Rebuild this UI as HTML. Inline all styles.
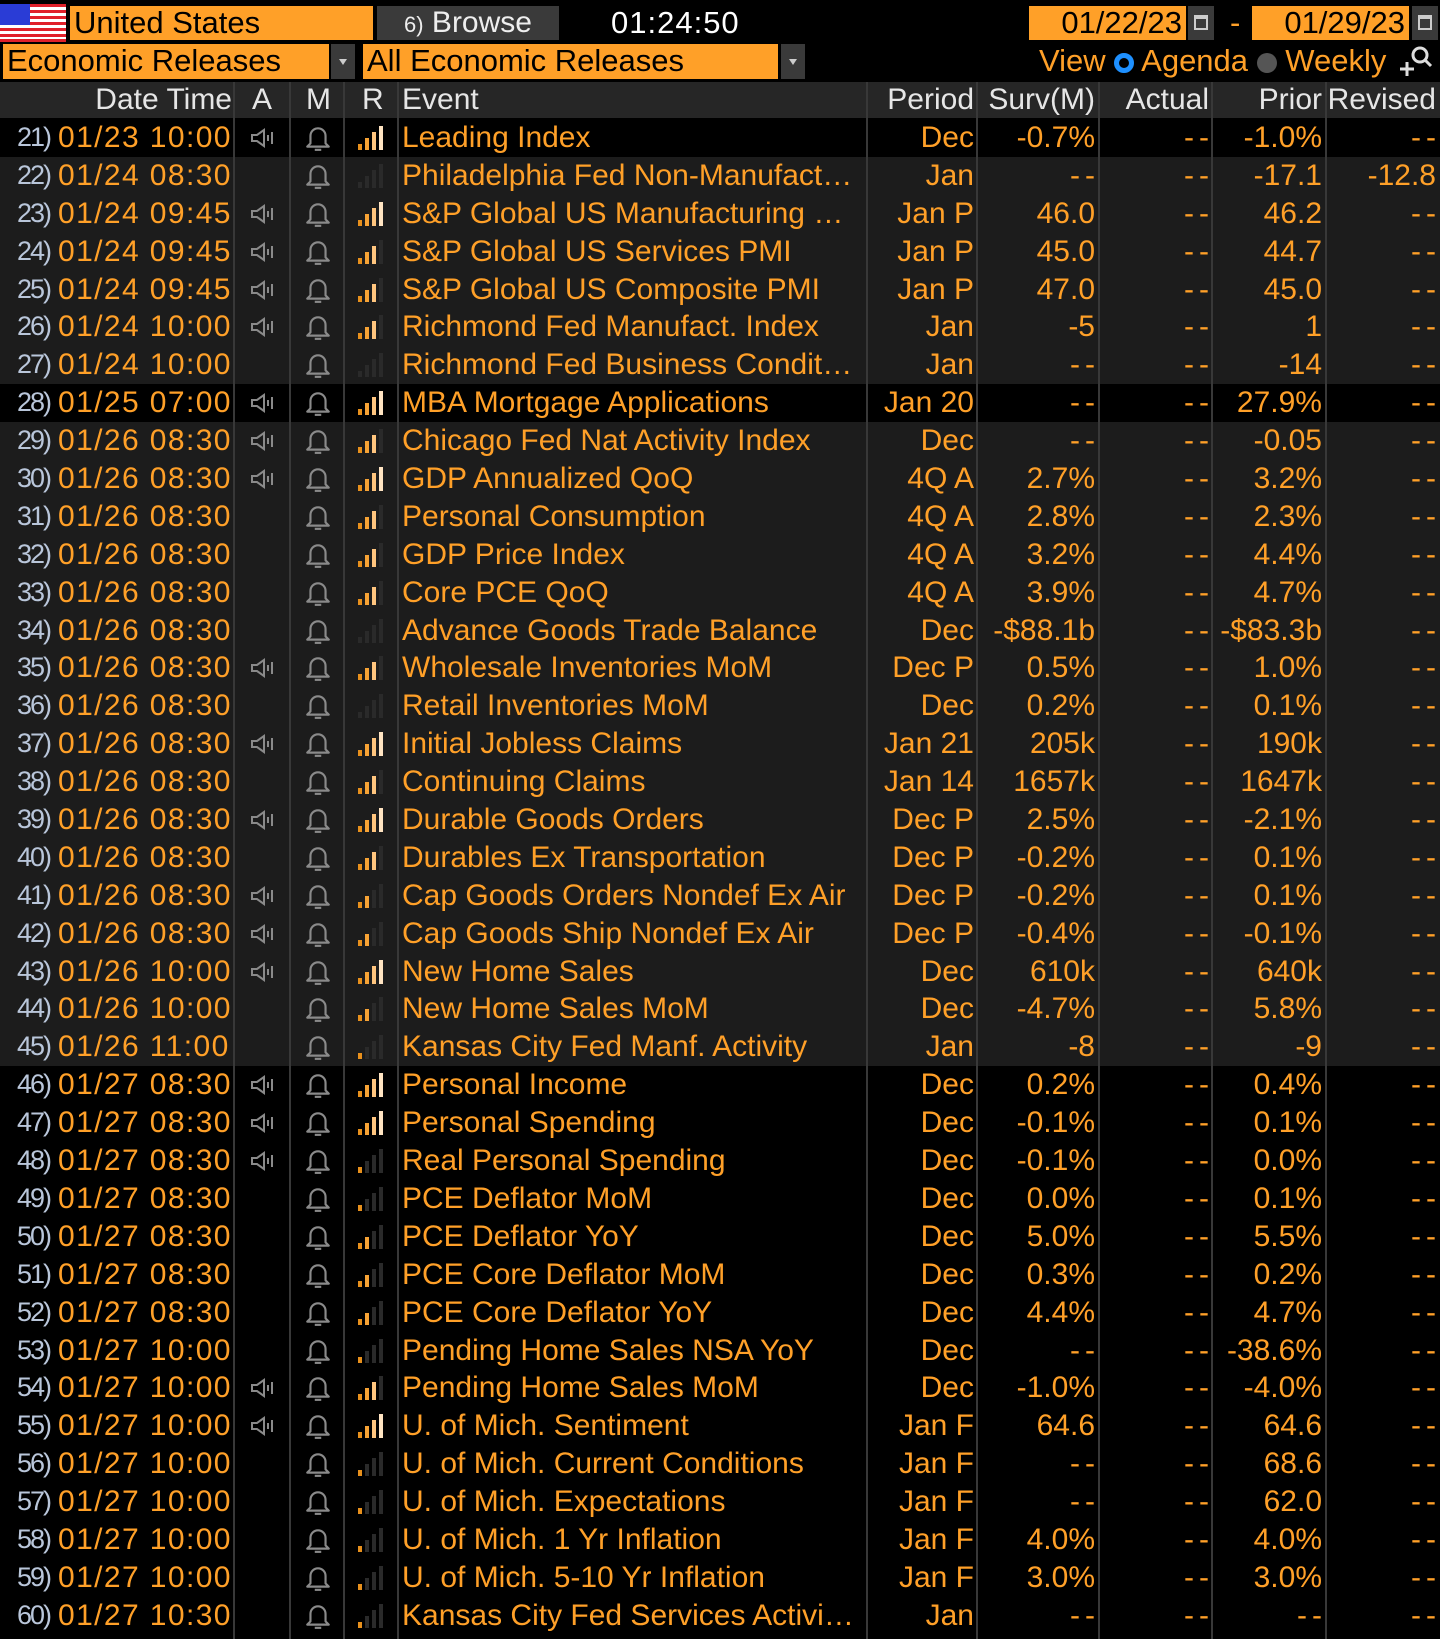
<!DOCTYPE html>
<html><head><meta charset="utf-8">
<style>
*{margin:0;padding:0;box-sizing:border-box}
body{width:1440px;height:1639px;background:#000;overflow:hidden;font-family:"Liberation Sans",sans-serif;color:#ffa028;position:relative}
.abs{position:absolute}
.box{position:absolute;background:#ffa028;color:#000;font-size:31px;line-height:34px;padding-left:4px;white-space:nowrap;overflow:hidden}
.dd{position:absolute;background:#3a3a3a;width:24px;height:35px}
.dd:after{content:"";position:absolute;left:8px;top:15px;border-left:4px solid transparent;border-right:4px solid transparent;border-top:6px solid #ccc}
.hdr{position:absolute;left:0;top:82px;width:1440px;height:36px;background:#262626;color:#e6e6e6;font-size:30px;line-height:36px}
.rows{position:absolute;left:0;top:119px;width:1440px}
.r{position:relative;height:37.9px;font-size:30px;line-height:37.9px;white-space:nowrap}
.g{background:#1c1c1c}
.r span,.hdr span{position:absolute;top:0}
.n{left:0;width:50px;text-align:right;color:#b9c6da;font-size:27px;letter-spacing:-2px}
.d{left:58px;letter-spacing:1.4px}
.ev{left:402px;width:456px;overflow:hidden;text-overflow:ellipsis}
.p{right:466px;text-align:right}
.s{right:345px}
.a{right:231px;letter-spacing:5px;margin-right:-5px}
.pr{right:118px}
.rv{right:4px}
.dash{letter-spacing:5px;margin-right:-5px}
.vl{position:absolute;top:82px;width:2px;height:1557px;background:#383838}
svg.sp{position:absolute;left:250px;top:8px}
svg.bl{position:absolute;left:304px;top:5px}
svg.br{position:absolute;left:358px;top:7px}
.br rect{fill:#2a2a2a}
.l1 .b1,.l2 .b1,.l3 .b1,.l4 .b1{fill:#e8901c}
.l2 .b2,.l3 .b2,.l4 .b2{fill:#f7a335}
.l3 .b3,.l4 .b3{fill:#ffc57e}
.l4 .b4{fill:#ffe4c2}
</style></head><body>
<svg class="abs" style="left:0;top:4px" width="66" height="38" viewBox="0 0 66 38"><rect width="66" height="38" fill="#fff"/><g fill="#e0202a"><rect y="0" width="66" height="3"/><rect y="6" width="66" height="3"/><rect y="12" width="66" height="3"/><rect y="18" width="66" height="3"/><rect y="24" width="66" height="3"/><rect y="30" width="66" height="3"/><rect y="35" width="66" height="3"/></g><rect width="30" height="21" fill="#2a3cd6"/></svg>
<div class="box" style="left:70px;top:6px;width:303px;height:34px">United States</div>
<div class="abs" style="left:377px;top:6px;width:182px;height:34px;background:#3a3a3a;color:#eee;font-size:30px;line-height:34px;text-align:center"><span style="font-size:22px">6)</span> Browse</div>
<div class="abs" style="left:611px;top:4px;color:#fff;font-size:31px;line-height:38px;letter-spacing:1px">01:24:50</div>
<div class="box" style="left:1029px;top:6px;width:157px;height:34px;text-align:right;padding-right:4px">01/22/23</div>
<div class="abs" style="left:1188px;top:6px;width:26px;height:34px;background:#3a3a3a"><div style="position:absolute;left:6px;top:9px;width:14px;height:15px;border:2px solid #ccc;border-top-width:4px"></div></div>
<div class="abs" style="left:1230px;top:4px;color:#ffa028;font-size:31px;line-height:38px">-</div>
<div class="box" style="left:1252px;top:6px;width:157px;height:34px;text-align:right;padding-right:4px">01/29/23</div>
<div class="abs" style="left:1412px;top:6px;width:26px;height:34px;background:#3a3a3a"><div style="position:absolute;left:6px;top:9px;width:14px;height:15px;border:2px solid #ccc;border-top-width:4px"></div></div>
<div class="box" style="left:3px;top:44px;width:326px;height:35px">Economic Releases</div>
<div class="dd" style="left:331px;top:44px"></div>
<div class="box" style="left:363px;top:44px;width:415px;height:35px">All Economic Releases</div>
<div class="dd" style="left:781px;top:44px"></div>
<div class="abs" style="left:1039px;top:42px;font-size:31px;line-height:38px;white-space:nowrap">View <span style="display:inline-block;width:20px;height:20px;border:5px solid #1e90ff;border-radius:50%;vertical-align:-2px"></span> Agenda <span style="display:inline-block;width:20px;height:20px;background:#555;border-radius:50%;vertical-align:-2px"></span> Weekly</div>
<svg class="abs" style="left:1396px;top:44px" width="38" height="34" viewBox="0 0 38 34"><circle cx="24" cy="11" r="7" stroke="#ddd" stroke-width="3" fill="none"/><path d="M29 16l6 6M4 25h14M11 18v14" stroke="#ddd" stroke-width="3"/></svg>

<div class="hdr"><span style="right:1208px">Date Time</span><span style="left:252px">A</span><span style="left:306px">M</span><span style="left:362px">R</span><span style="left:402px">Event</span><span style="right:466px">Period</span><span style="right:345px">Surv(M)</span><span style="right:231px">Actual</span><span style="right:118px">Prior</span><span style="right:4px">Revised</span></div>

<div class="rows" id="rows"></div>
<script>
var D=[
["21","01/23 10:00",1,4,"Leading Index","Dec","-0.7%","-1.0%","--",0],
["22","01/24 08:30",0,0,"Philadelphia Fed Non-Manufacturing","Jan","--","-17.1","-12.8",1],
["23","01/24 09:45",1,4,"S&P Global US Manufacturing PMI","Jan P","46.0","46.2","--",1],
["24","01/24 09:45",1,3,"S&P Global US Services PMI","Jan P","45.0","44.7","--",1],
["25","01/24 09:45",1,3,"S&P Global US Composite PMI","Jan P","47.0","45.0","--",1],
["26","01/24 10:00",1,3,"Richmond Fed Manufact. Index","Jan","-5","1","--",1],
["27","01/24 10:00",0,0,"Richmond Fed Business Conditions","Jan","--","-14","--",1],
["28","01/25 07:00",1,4,"MBA Mortgage Applications","Jan 20","--","27.9%","--",0],
["29","01/26 08:30",1,3,"Chicago Fed Nat Activity Index","Dec","--","-0.05","--",1],
["30","01/26 08:30",1,4,"GDP Annualized QoQ","4Q A","2.7%","3.2%","--",1],
["31","01/26 08:30",0,3,"Personal Consumption","4Q A","2.8%","2.3%","--",1],
["32","01/26 08:30",0,3,"GDP Price Index","4Q A","3.2%","4.4%","--",1],
["33","01/26 08:30",0,3,"Core PCE QoQ","4Q A","3.9%","4.7%","--",1],
["34","01/26 08:30",0,0,"Advance Goods Trade Balance","Dec","-$88.1b","-$83.3b","--",1],
["35","01/26 08:30",1,3,"Wholesale Inventories MoM","Dec P","0.5%","1.0%","--",1],
["36","01/26 08:30",0,0,"Retail Inventories MoM","Dec","0.2%","0.1%","--",1],
["37","01/26 08:30",1,4,"Initial Jobless Claims","Jan 21","205k","190k","--",1],
["38","01/26 08:30",0,3,"Continuing Claims","Jan 14","1657k","1647k","--",1],
["39","01/26 08:30",1,4,"Durable Goods Orders","Dec P","2.5%","-2.1%","--",1],
["40","01/26 08:30",0,3,"Durables Ex Transportation","Dec P","-0.2%","0.1%","--",1],
["41","01/26 08:30",1,2,"Cap Goods Orders Nondef Ex Air","Dec P","-0.2%","0.1%","--",1],
["42","01/26 08:30",1,2,"Cap Goods Ship Nondef Ex Air","Dec P","-0.4%","-0.1%","--",1],
["43","01/26 10:00",1,4,"New Home Sales","Dec","610k","640k","--",1],
["44","01/26 10:00",0,2,"New Home Sales MoM","Dec","-4.7%","5.8%","--",1],
["45","01/26 11:00",0,1,"Kansas City Fed Manf. Activity","Jan","-8","-9","--",1],
["46","01/27 08:30",1,4,"Personal Income","Dec","0.2%","0.4%","--",0],
["47","01/27 08:30",1,4,"Personal Spending","Dec","-0.1%","0.1%","--",0],
["48","01/27 08:30",1,1,"Real Personal Spending","Dec","-0.1%","0.0%","--",0],
["49","01/27 08:30",0,1,"PCE Deflator MoM","Dec","0.0%","0.1%","--",0],
["50","01/27 08:30",0,2,"PCE Deflator YoY","Dec","5.0%","5.5%","--",0],
["51","01/27 08:30",0,2,"PCE Core Deflator MoM","Dec","0.3%","0.2%","--",0],
["52","01/27 08:30",0,2,"PCE Core Deflator YoY","Dec","4.4%","4.7%","--",0],
["53","01/27 10:00",0,1,"Pending Home Sales NSA YoY","Dec","--","-38.6%","--",0],
["54","01/27 10:00",1,3,"Pending Home Sales MoM","Dec","-1.0%","-4.0%","--",0],
["55","01/27 10:00",1,4,"U. of Mich. Sentiment","Jan F","64.6","64.6","--",0],
["56","01/27 10:00",0,1,"U. of Mich. Current Conditions","Jan F","--","68.6","--",0],
["57","01/27 10:00",0,1,"U. of Mich. Expectations","Jan F","--","62.0","--",0],
["58","01/27 10:00",0,1,"U. of Mich. 1 Yr Inflation","Jan F","4.0%","4.0%","--",0],
["59","01/27 10:00",0,1,"U. of Mich. 5-10 Yr Inflation","Jan F","3.0%","3.0%","--",0],
["60","01/27 10:30",0,1,"Kansas City Fed Services Activity Index","Jan","--","--","--",0]];
var SP='<svg class="sp" width="26" height="22" viewBox="0 0 26 22"><path d="M2 8h5l7-5v16l-7-5H2z" stroke="#8a8a8a" stroke-width="2" fill="none"/><path d="M18 8v6M22 5v12" stroke="#8a8a8a" stroke-width="2"/></svg>';
var BL='<svg class="bl" width="28" height="28" viewBox="0 0 26 26"><path d="M6 18V11a7 7 0 0 1 14 0v7l3 3H3z" stroke="#8a8a8a" stroke-width="2" fill="none" stroke-linejoin="round"/><path d="M10 24h6" stroke="#8a8a8a" stroke-width="2"/></svg>';
function esc(s){return s.replace(/&/g,'&amp;')}
function v(c,s){return '<span class="'+c+(s=='--'?' dash':'')+'">'+esc(s)+'</span>'}
var h='';
D.forEach(function(r){
h+='<div class="r'+(r[9]?' g':'')+'"><span class="n">'+r[0]+')</span><span class="d">'+r[1]+'</span>'+(r[2]?SP:'')+BL+
'<svg class="br l'+r[3]+'" width="26" height="24" viewBox="0 0 26 24"><rect class="b1" x="0" y="18" width="4" height="6"/><rect class="b2" x="7" y="12" width="4" height="12"/><rect class="b3" x="14" y="6" width="4" height="18"/><rect class="b4" x="21" y="0" width="4" height="24"/></svg>'+
'<span class="ev">'+esc(r[4])+'</span>'+v('p',r[5])+v('s',r[6])+'<span class="a">--</span>'+v('pr',r[7])+v('rv',r[8])+'</div>';
});
document.getElementById('rows').innerHTML=h;
</script>
<div class="vl" style="left:233px"></div><div class="vl" style="left:289px"></div><div class="vl" style="left:343px"></div><div class="vl" style="left:397px"></div><div class="vl" style="left:866px"></div><div class="vl" style="left:976px"></div><div class="vl" style="left:1098px"></div><div class="vl" style="left:1211px"></div><div class="vl" style="left:1325px"></div>
</body></html>
